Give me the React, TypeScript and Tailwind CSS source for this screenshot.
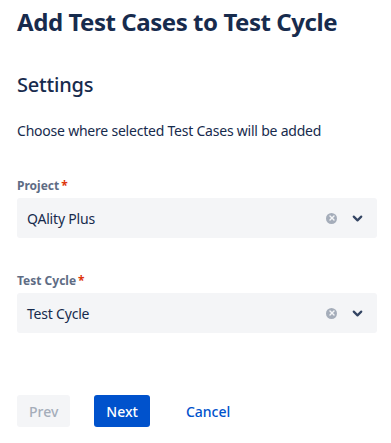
import { X, ChevronDown } from "lucide-react";

function SelectField({ label, value }: { label: string; value: string }) {
  return (
    <div className="flex flex-col">
      <label className="text-[12px] font-bold text-[#5e6c84] leading-[16px] mb-[4px]">
        {label}
        <span className="text-[#de350b] ml-[2px]">*</span>
      </label>
      <div className="flex items-center h-[40px] rounded-[3px] bg-[#f4f5f7] pl-[10px] pr-[12px]">
        <span className="flex-1 text-[14px] text-[#172b4d] tracking-[-0.2px]">{value}</span>
        <span className="flex items-center justify-center w-[11px] h-[11px] rounded-full bg-[#a5adba] mr-[13px]">
          <X size={8} strokeWidth={4} color="#f4f5f7" />
        </span>
        <ChevronDown size={15} strokeWidth={3.5} color="#344563" />
      </div>
    </div>
  );
}

export default function App() {
  return (
    <div className="w-[391px] h-[443px] bg-white pl-[17px] pr-[14px] pt-[6px] font-['Noto_Sans',sans-serif]">
      <h1 className="text-[24px] font-bold text-[#172b4d] leading-[32px] tracking-[-0.45px]">Add Test Cases to Test Cycle</h1>
      <h2 className="mt-[35px] text-[20px] font-medium text-[#172b4d] leading-[24px] tracking-[-0.2px]">Settings</h2>
      <p className="mt-[24px] text-[14px] text-[#172b4d] leading-[20px] tracking-[-0.22px]">Choose where selected Test Cases will be added</p>
      <div className="mt-[37px]">
        <SelectField label="Project" value="QAlity Plus" />
      </div>
      <div className="mt-[35px]">
        <SelectField label="Test Cycle" value="Test Cycle" />
      </div>
      <div className="mt-[62px] flex items-center gap-[24px]">
        <button className="h-[32px] px-[12px] rounded-[3px] bg-[#f4f5f7] text-[14px] font-medium text-[#a5adba]">Prev</button>
        <button className="h-[32px] px-[12px] rounded-[3px] bg-[#0052cc] text-[14px] font-medium text-white">Next</button>
        <button className="h-[32px] px-[12px] text-[14px] font-medium text-[#0052cc]">Cancel</button>
      </div>
    </div>
  );
}
